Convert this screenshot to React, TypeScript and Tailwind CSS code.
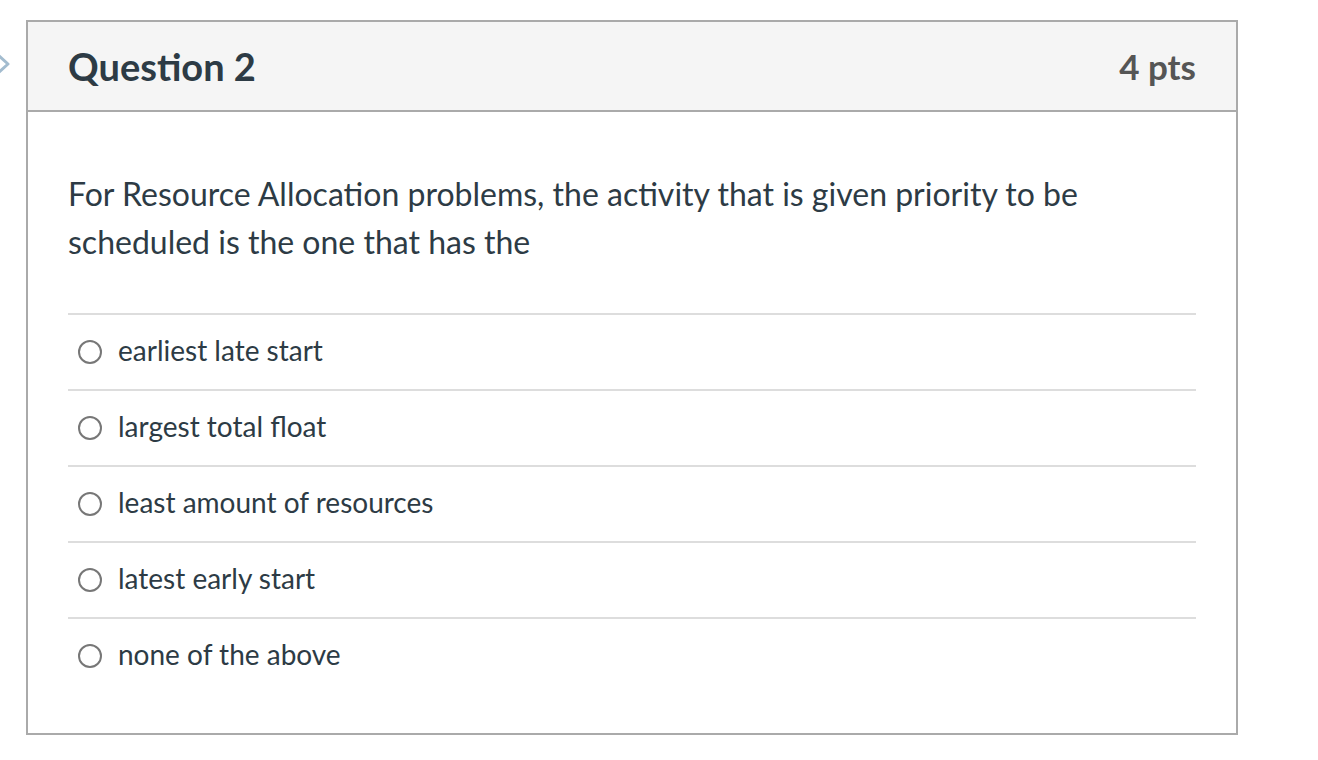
const options = [
  'earliest late start',
  'largest total float',
  'least amount of resources',
  'latest early start',
  'none of the above',
];

export default function App() {
  return (
    <div className="relative min-h-[760px] w-[1318px] bg-white pt-5 text-[#2d3b45]" style={{ fontFamily: 'Lato, "Open Sans", sans-serif' }}>
      {/* previous-question chevron peeking in at the edge */}
      <svg className="absolute left-[-16px] top-[44px]" width="28" height="40" viewBox="0 0 28 40" fill="none">
        <path d="M4 2 L24 20 L4 38" stroke="#a3bccf" strokeWidth="3" strokeLinejoin="round" />
      </svg>

      <div className="ml-[26px] w-[1212px] h-[715px] border-2 border-[#aaaaaa] flex flex-col">
        {/* Header */}
        <div className="h-[90px] shrink-0 bg-[#f5f5f5] border-b-2 border-[#aaaaaa] px-10 flex items-center justify-between">
          <h2 className="text-[38px] font-bold">Question 2</h2>
          <span className="text-[35px] font-bold text-[#555]">4 pts</span>
        </div>

        {/* Body */}
        <div className="px-10 pt-[58px]">
          <p className="text-[32px] leading-[48px]">
            For Resource Allocation problems, the activity that is given priority to be scheduled is the one that has the
          </p>

          <div className="mt-[47px]">
            {options.map((opt) => (
              <div key={opt} className="h-[76px] border-t-2 border-[#dddddd] flex items-center gap-4 pl-[10px]">
                <span className="w-6 h-6 rounded-full border-2 border-[#777] bg-white shrink-0" />
                <span className="text-[28px] -mt-1">{opt}</span>
              </div>
            ))}
          </div>
        </div>
      </div>
    </div>
  );
}
